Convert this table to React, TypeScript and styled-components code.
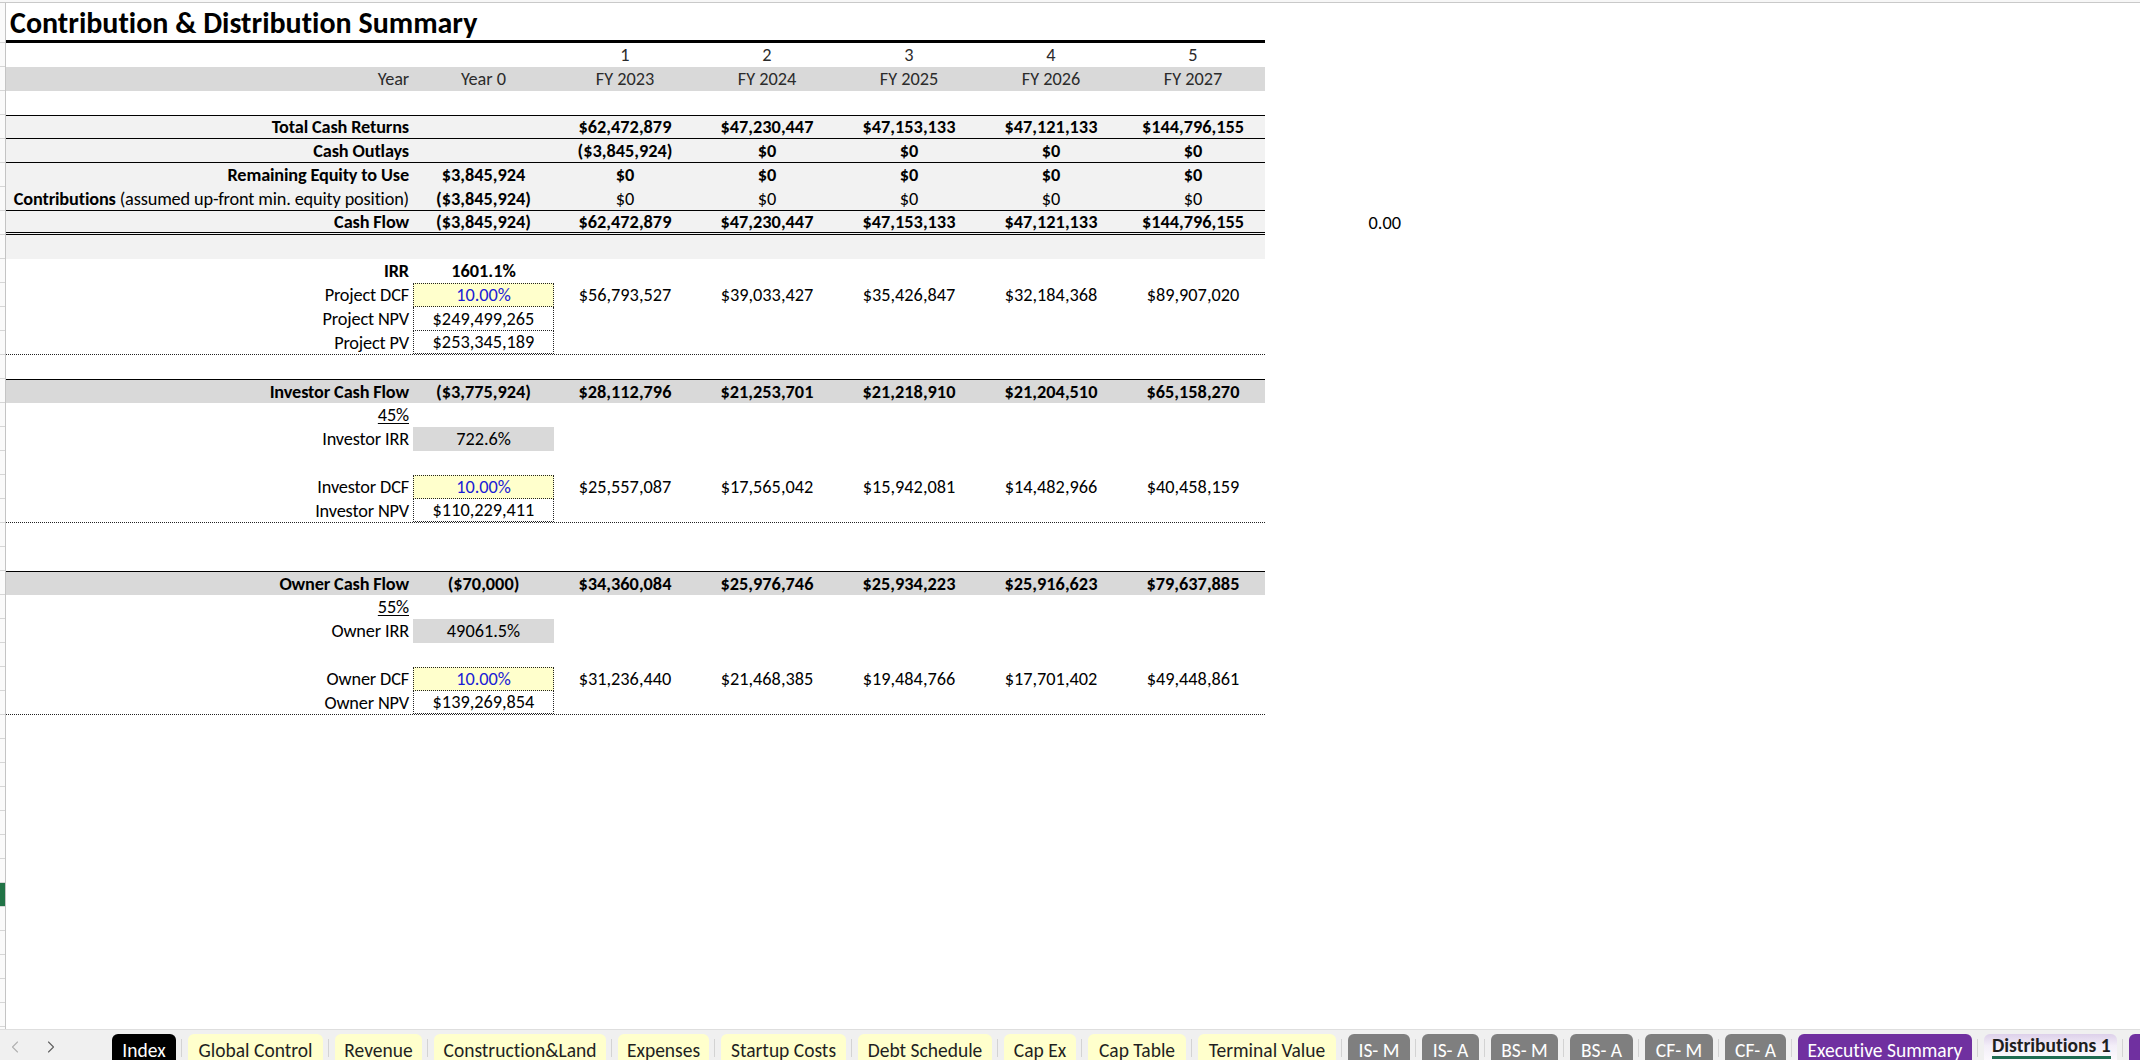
import React from 'react';
import styled, { createGlobalStyle, css } from 'styled-components';
import { ChevronLeft, ChevronRight } from 'lucide-react';

const FONT = `Carlito, "Liberation Sans Narrow", "Liberation Sans", Arial, sans-serif`;

const GlobalStyle = createGlobalStyle`
  html, body { margin: 0; padding: 0; background: #fff; }
  body { font-family: ${FONT}; color: #000; font-variant-ligatures: none; }
  #root { width: 2140px; height: 1060px; }
`;

const Page = styled.div`
  width: 2140px;
  height: 1060px;
  display: flex;
  flex-direction: column;
  overflow: hidden;
  background: #fff;
`;

const TopEdge = styled.div`
  flex: none;
  height: 2px;
  background: #f7f7f7;
  border-bottom: 1px solid #c9c9c9;
`;

const SheetArea = styled.div`
  flex: 1;
  display: flex;
  min-height: 0;
  overflow: hidden;
`;

const RowEdge = styled.div`
  flex: none;
  width: 5px;
  border-right: 1px solid #c4c4c4;
  display: flex;
  flex-direction: column;
`;

const EdgeTick = styled.div<{ $h: number; $active?: boolean }>`
  flex: none;
  height: ${(p) => p.$h}px;
  box-sizing: border-box;
  border-bottom: 1px solid #d6d6d6;
  background: ${(p) => (p.$active ? '#217346' : '#fafafa')};
`;

const Sheet = styled.div`
  flex: 1;
  display: flex;
  flex-direction: column;
`;

const TitleRow = styled.div`
  width: 1259px;
  height: 40px;
  box-sizing: border-box;
  border-bottom: 3px solid #000;
  display: flex;
  align-items: center;
  padding-left: 4px;
  padding-top: 2px;
  font-size: 30px;
  font-weight: 700;
`;

const Row = styled.div`
  display: flex;
  height: 24px;
  flex: none;
`;

type Edge = 'solid' | 'double' | 'dotted' | undefined;

const edgeCss = (e: Edge) =>
  e === 'solid' ? '1px solid #000' : e === 'double' ? '3px double #000' : e === 'dotted' ? '1px dotted #222' : 'none';

const Band = styled.div<{ $bg?: string; $top?: Edge; $bottom?: Edge }>`
  width: 1259px;
  height: 24px;
  box-sizing: border-box;
  display: grid;
  grid-template-columns: 407px 141px repeat(5, 142px);
  background: ${(p) => p.$bg || '#fff'};
  border-top: ${(p) => edgeCss(p.$top)};
  border-bottom: ${(p) => edgeCss(p.$bottom)};
`;

type Kind = 'input' | 'boxed' | 'shade' | undefined;

const Cell = styled.div<{ $bold?: boolean; $kind?: Kind; $soft?: boolean }>`
  display: flex;
  align-items: center;
  justify-content: center;
  box-sizing: border-box;
  height: 100%;
  font-size: 18.3px;
  white-space: nowrap;
  font-weight: ${(p) => (p.$bold ? 700 : 400)};
  color: ${(p) => (p.$soft ? '#2b2b2b' : '#000')};
  ${(p) =>
    p.$kind === 'input' &&
    css`
      background: #ffffcc;
      color: #1b1bd6;
      border: 1px dotted #222;
    `}
  ${(p) =>
    p.$kind === 'boxed' &&
    css`
      border: 1px dotted #222;
      border-top: none;
    `}
  ${(p) =>
    p.$kind === 'shade' &&
    css`
      background: #d9d9d9;
    `}
`;

const LabelCell = styled(Cell)<{ $underline?: boolean }>`
  justify-content: flex-end;
  padding-right: 4px;
  letter-spacing: -0.15px;
  text-decoration: ${(p) => (p.$underline ? 'underline' : 'none')};
  text-underline-offset: 2px;
`;

const Normal = styled.span`
  font-weight: 400;
`;

const SideCell = styled.div`
  width: 136px;
  display: flex;
  align-items: center;
  justify-content: flex-end;
  font-size: 18.3px;
`;

const Filler = styled.div`
  flex: 1;
`;

/* ---------- tab bar ---------- */

const TabBar = styled.div`
  flex: none;
  height: 31px;
  box-sizing: border-box;
  background: #f0f0f0;
  border-top: 1px solid #dedede;
  display: flex;
  align-items: flex-end;
  overflow: hidden;
`;

const Nav = styled.div`
  width: 112px;
  height: 100%;
  flex: none;
  display: flex;
  align-items: center;
  gap: 16px;
  padding-left: 5px;
  box-sizing: border-box;
  padding-top: 4px;
`;

const NavBtn = styled.span<{ $dim?: boolean }>`
  display: flex;
  color: ${(p) => (p.$dim ? '#b0b0b0' : '#5f5f5f')};
`;

const TabList = styled.div`
  display: flex;
  align-items: flex-end;
  height: 26px;
`;

type TabTone = 'black' | 'yellow' | 'grey' | 'purple' | 'active';

const toneCss: Record<TabTone, ReturnType<typeof css>> = {
  black: css`background: #000; color: #fff;`,
  yellow: css`background: #ffffcc; color: #1f1f1f;`,
  grey: css`background: #7f7f7f; color: #fff;`,
  purple: css`background: #7030a0; color: #fff;`,
  active: css`
    background: linear-gradient(#ddd0ea 0%, #f3eef8 45%, #fbf9fd 100%);
    color: #1f1f1f;
    font-weight: 600;
  `,
};

const Tab = styled.div<{ $w: number; $tone: TabTone }>`
  flex: none;
  width: ${(p) => p.$w}px;
  height: 26px;
  box-sizing: border-box;
  border-radius: 6px 6px 0 0;
  display: flex;
  align-items: center;
  justify-content: center;
  padding-top: 5px;
  font-family: ${FONT};
  font-size: 19.5px;
  white-space: nowrap;
  ${(p) => toneCss[p.$tone]}
  ${(p) =>
    p.$tone === 'active' &&
    css`
      padding-top: 0;
      align-items: flex-start;
      flex-direction: column;
      justify-content: flex-start;
      padding-left: 8px;
    `}
`;

const ActiveLabel = styled.span`
  display: inline-block;
  padding-top: 1px;
  border-bottom: 3px solid #1e6b52;
  line-height: 21px;
`;

const Sep = styled.div`
  flex: none;
  width: 1px;
  height: 18px;
  margin: 0 6px 3px 5px;
  background: #d3d3d3;
`;

/* ---------- data ---------- */

const yearsNum = ['1', '2', '3', '4', '5'];
const years = ['FY 2023', 'FY 2024', 'FY 2025', 'FY 2026', 'FY 2027'];
const totalCash = ['$62,472,879', '$47,230,447', '$47,153,133', '$47,121,133', '$144,796,155'];
const outlays = ['($3,845,924)', '$0', '$0', '$0', '$0'];
const zeros = ['$0', '$0', '$0', '$0', '$0'];
const cashFlow = ['$62,472,879', '$47,230,447', '$47,153,133', '$47,121,133', '$144,796,155'];
const projectPv = ['$56,793,527', '$39,033,427', '$35,426,847', '$32,184,368', '$89,907,020'];
const investorCf = ['$28,112,796', '$21,253,701', '$21,218,910', '$21,204,510', '$65,158,270'];
const investorPv = ['$25,557,087', '$17,565,042', '$15,942,081', '$14,482,966', '$40,458,159'];
const ownerCf = ['$34,360,084', '$25,976,746', '$25,934,223', '$25,916,623', '$79,637,885'];
const ownerPv = ['$31,236,440', '$21,468,385', '$19,484,766', '$17,701,402', '$49,448,861'];

type RowSpec = {
  label?: React.ReactNode;
  labelBold?: boolean;
  underline?: boolean;
  y0?: string;
  y0Bold?: boolean;
  y0Kind?: Kind;
  vals?: string[];
  valsBold?: boolean;
  soft?: boolean;
  bg?: string;
  top?: Edge;
  bottom?: Edge;
  side?: string;
};

const LIGHT = '#f2f2f2';
const MID = '#d9d9d9';

const rows: RowSpec[] = [
  { vals: yearsNum, soft: true },
  { label: 'Year', y0: 'Year 0', vals: years, bg: MID, soft: true },
  {},
  { label: 'Total Cash Returns', labelBold: true, vals: totalCash, valsBold: true, bg: LIGHT, top: 'solid', bottom: 'solid' },
  { label: 'Cash Outlays', labelBold: true, vals: outlays, valsBold: true, bg: LIGHT, bottom: 'solid' },
  { label: 'Remaining Equity to Use', labelBold: true, y0: '$3,845,924', y0Bold: true, vals: zeros, valsBold: true, bg: LIGHT },
  {
    label: (
      <span>
        Contributions<Normal> (assumed up-front min. equity position)</Normal>
      </span>
    ),
    labelBold: true,
    y0: '($3,845,924)',
    y0Bold: true,
    vals: zeros,
    bg: LIGHT,
    bottom: 'solid',
  },
  { label: 'Cash Flow', labelBold: true, y0: '($3,845,924)', y0Bold: true, vals: cashFlow, valsBold: true, bg: LIGHT, bottom: 'double', side: '0.00' },
  { bg: LIGHT },
  { label: 'IRR', labelBold: true, y0: '1601.1%', y0Bold: true },
  { label: 'Project DCF', y0: '10.00%', y0Kind: 'input', vals: projectPv },
  { label: 'Project NPV', y0: '$249,499,265', y0Kind: 'boxed' },
  { label: 'Project PV', y0: '$253,345,189', y0Kind: 'boxed', bottom: 'dotted' },
  {},
  { label: 'Investor Cash Flow', labelBold: true, y0: '($3,775,924)', y0Bold: true, vals: investorCf, valsBold: true, bg: MID, top: 'solid' },
  { label: '45%', underline: true },
  { label: 'Investor IRR', y0: '722.6%', y0Kind: 'shade' },
  {},
  { label: 'Investor DCF', y0: '10.00%', y0Kind: 'input', vals: investorPv },
  { label: 'Investor NPV', y0: '$110,229,411', y0Kind: 'boxed', bottom: 'dotted' },
  {},
  {},
  { label: 'Owner Cash Flow', labelBold: true, y0: '($70,000)', y0Bold: true, vals: ownerCf, valsBold: true, bg: MID, top: 'solid' },
  { label: '55%', underline: true },
  { label: 'Owner IRR', y0: '49061.5%', y0Kind: 'shade' },
  {},
  { label: 'Owner DCF', y0: '10.00%', y0Kind: 'input', vals: ownerPv },
  { label: 'Owner NPV', y0: '$139,269,854', y0Kind: 'boxed', bottom: 'dotted' },
];

type TabSpec = { name: string; w: number; tone: TabTone };

const tabs: TabSpec[] = [
  { name: 'Index', w: 64, tone: 'black' },
  { name: 'Global Control', w: 135, tone: 'yellow' },
  { name: 'Revenue', w: 87, tone: 'yellow' },
  { name: 'Construction&Land', w: 172, tone: 'yellow' },
  { name: 'Expenses', w: 91, tone: 'yellow' },
  { name: 'Startup Costs', w: 125, tone: 'yellow' },
  { name: 'Debt Schedule', w: 134, tone: 'yellow' },
  { name: 'Cap Ex', w: 72, tone: 'yellow' },
  { name: 'Cap Table', w: 98, tone: 'yellow' },
  { name: 'Terminal Value', w: 138, tone: 'yellow' },
  { name: 'IS- M', w: 62, tone: 'grey' },
  { name: 'IS- A', w: 57, tone: 'grey' },
  { name: 'BS- M', w: 67, tone: 'grey' },
  { name: 'BS- A', w: 63, tone: 'grey' },
  { name: 'CF- M', w: 68, tone: 'grey' },
  { name: 'CF- A', w: 61, tone: 'grey' },
  { name: 'Executive Summary', w: 174, tone: 'purple' },
  { name: 'Distributions 1', w: 133, tone: 'active' },
  { name: '', w: 150, tone: 'purple' },
];

const edgeTicks = Array.from({ length: 44 }, (_, i) => i);

export default function App() {
  return (
    <Page>
      <GlobalStyle />
      <TopEdge />
      <SheetArea>
        <RowEdge>
          <EdgeTick $h={40} />
          {edgeTicks.map((i) => (
            <EdgeTick key={i} $h={24} $active={i === 35} />
          ))}
        </RowEdge>
        <Sheet>
          <TitleRow>Contribution &amp; Distribution Summary</TitleRow>
          {rows.map((r, i) => (
            <Row key={i}>
              <Band $bg={r.bg} $top={r.top} $bottom={r.bottom}>
                <LabelCell $bold={r.labelBold} $underline={r.underline} $soft={r.soft}>
                  {r.label}
                </LabelCell>
                <Cell $bold={r.y0Bold} $kind={r.y0Kind} $soft={r.soft}>
                  {r.y0}
                </Cell>
                {Array.from({ length: 5 }, (_, k) => (
                  <Cell key={k} $bold={r.valsBold} $soft={r.soft}>
                    {r.vals ? r.vals[k] : ''}
                  </Cell>
                ))}
              </Band>
              <SideCell>{r.side}</SideCell>
            </Row>
          ))}
          <Filler />
        </Sheet>
      </SheetArea>
      <TabBar>
        <Nav>
          <NavBtn $dim>
            <ChevronLeft size={20} strokeWidth={1.3} />
          </NavBtn>
          <NavBtn>
            <ChevronRight size={20} strokeWidth={1.3} />
          </NavBtn>
        </Nav>
        <TabList>
          {tabs.map((t, i) => (
            <React.Fragment key={i}>
              {i > 0 && <Sep />}
              <Tab $w={t.w} $tone={t.tone}>
                {t.tone === 'active' ? <ActiveLabel>{t.name}</ActiveLabel> : t.name}
              </Tab>
            </React.Fragment>
          ))}
        </TabList>
      </TabBar>
    </Page>
  );
}
